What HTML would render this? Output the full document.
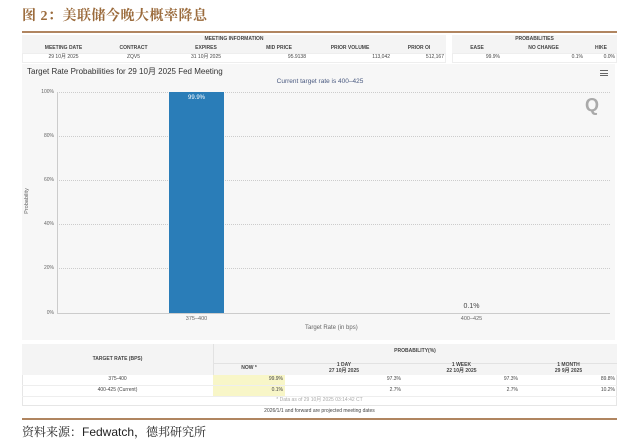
<!DOCTYPE html>
<html><head><meta charset="utf-8"><style>
*{margin:0;padding:0;box-sizing:border-box}
body{width:640px;height:440px;background:#fff;font-family:"Liberation Sans",Arial,sans-serif;position:relative;overflow:hidden;color:#333}
.a{position:absolute}
.t{font-size:5px;font-weight:bold;color:#444;text-align:center;line-height:9px}
.c{position:absolute;font-size:5px;color:#444;line-height:9px}
.g{position:absolute;left:57px;width:553px;border-top:1px dotted #ccc}
.yl{position:absolute;left:30px;width:24px;text-align:right;font-size:5px;color:#666}
</style></head><body>
<div class="a" style="left:22px;top:5px;font-family:'Liberation Serif','Noto Serif CJK SC',serif;font-size:14px;color:#9b6b3c;font-weight:bold;letter-spacing:0.5px">图 2：美联储今晚大概率降息</div>
<div class="a" style="left:22px;top:31px;width:595px;height:2px;background:#b08560"></div>

<div class="a" style="left:22px;top:35px;width:424px;height:28px;background:#f4f4f4"></div>
<div class="a" style="left:452px;top:35px;width:165px;height:28px;background:#f4f4f4"></div>
<div class="a" style="left:22px;top:53px;width:424px;height:10px;background:#fff;border:1px solid #eee"></div>
<div class="a" style="left:452px;top:53px;width:165px;height:10px;background:#fff;border:1px solid #eee"></div>
<div class="c t" style="left:22px;top:35px;width:424px">MEETING INFORMATION</div>
<div class="c t" style="left:452px;top:35px;width:165px">PROBABILITIES</div>
<div class="c t" style="left:22px;top:44px;width:83px">MEETING DATE</div>
<div class="c t" style="left:105px;top:44px;width:57px">CONTRACT</div>
<div class="c t" style="left:162px;top:44px;width:88px">EXPIRES</div>
<div class="c t" style="left:250px;top:44px;width:58px">MID PRICE</div>
<div class="c t" style="left:308px;top:44px;width:84px">PRIOR VOLUME</div>
<div class="c t" style="left:392px;top:44px;width:54px">PRIOR OI</div>
<div class="c t" style="left:452px;top:44px;width:50px">EASE</div>
<div class="c t" style="left:502px;top:44px;width:83px">NO CHANGE</div>
<div class="c t" style="left:585px;top:44px;width:32px">HIKE</div>
<div class="c" style="left:22px;top:53px;width:83px;text-align:center">29 10月 2025</div>
<div class="c" style="left:105px;top:53px;width:57px;text-align:center">ZQV5</div>
<div class="c" style="left:162px;top:53px;width:88px;text-align:center">31 10月 2025</div>
<div class="c" style="left:250px;top:53px;width:56px;text-align:right">95.9138</div>
<div class="c" style="left:308px;top:53px;width:82px;text-align:right">113,042</div>
<div class="c" style="left:392px;top:53px;width:52px;text-align:right">512,167</div>
<div class="c" style="left:452px;top:53px;width:48px;text-align:right">99.9%</div>
<div class="c" style="left:502px;top:53px;width:81px;text-align:right">0.1%</div>
<div class="c" style="left:585px;top:53px;width:30px;text-align:right">0.0%</div>

<div class="a" style="left:22px;top:64px;width:593px;height:276px;background:#f7f7f7"></div>
<div class="a" style="left:27px;top:66px;font-size:8px;color:#333">Target Rate Probabilities for 29 10月 2025 Fed Meeting</div>
<div class="a" style="left:600px;top:70px;width:8px;height:6px;border-top:1px solid #666;border-bottom:1px solid #666"><div style="margin-top:1.5px;border-top:1px solid #666"></div></div>
<div class="a" style="left:0;top:78px;width:640px;text-align:center;font-size:6.5px;color:#4a5a80">Current target rate is 400–425</div>
<div class="a" style="left:585px;top:95px;font-size:18px;font-weight:bold;color:#aaa">Q</div>
<div class="g" style="top:92px"></div><div class="g" style="top:136px"></div><div class="g" style="top:180px"></div><div class="g" style="top:224px"></div><div class="g" style="top:268px"></div>
<div class="a" style="left:57px;top:313px;width:553px;border-top:1px solid #ccc"></div>
<div class="a" style="left:57px;top:92px;height:221px;border-left:1px solid #ccc"></div>
<div class="yl" style="top:89px">100%</div><div class="yl" style="top:133px">80%</div><div class="yl" style="top:177px">60%</div><div class="yl" style="top:221px">40%</div><div class="yl" style="top:265px">20%</div><div class="yl" style="top:310px">0%</div>
<div class="a" style="left:14px;top:198px;font-size:5.5px;color:#666;transform:rotate(-90deg)">Probability</div>
<div class="a" style="left:169px;top:92px;width:55px;height:221px;background:#2a7db8"></div>
<div class="a" style="left:169px;top:95px;width:55px;text-align:center;font-size:6px;color:#fff">99.9%</div>
<div class="a" style="left:169px;top:316px;width:55px;text-align:center;font-size:5.5px;color:#666">375–400</div>
<div class="a" style="left:444px;top:303px;width:55px;text-align:center;font-size:7px;color:#444">0.1%</div>
<div class="a" style="left:444px;top:316px;width:55px;text-align:center;font-size:5.5px;color:#666">400–425</div>
<div class="a" style="left:305px;top:325px;font-size:6px;color:#666">Target Rate (in bps)</div>

<div class="a" style="left:22px;top:344px;width:595px;height:62px;border:1px solid #e6e6e6;background:#fff"></div>
<div class="a" style="left:22px;top:344px;width:595px;height:31px;background:#f4f4f4"></div>
<div class="a" style="left:213px;top:363px;width:404px;border-top:1px solid #e2e2e2"></div>
<div class="a" style="left:213px;top:344px;height:52px;border-left:1px solid #e2e2e2"></div>
<div class="a" style="left:213px;top:375px;width:72px;height:21px;background:#f8f6c8"></div>
<div class="c t" style="left:22px;top:355px;width:191px">TARGET RATE (BPS)</div>
<div class="c t" style="left:213px;top:347px;width:404px">PROBABILITY(%)</div>
<div class="c t" style="left:213px;top:364px;width:72px">NOW *</div>
<div class="c t" style="left:285px;top:361px;width:118px;line-height:6px;padding-top:1px">1 DAY<br>27 10月 2025</div>
<div class="c t" style="left:403px;top:361px;width:117px;line-height:6px;padding-top:1px">1 WEEK<br>22 10月 2025</div>
<div class="c t" style="left:520px;top:361px;width:97px;line-height:6px;padding-top:1px">1 MONTH<br>29 9月 2025</div>
<div class="c" style="left:22px;top:375px;width:191px;text-align:center">375-400</div>
<div class="c" style="left:213px;top:375px;width:70px;text-align:right">99.9%</div>
<div class="c" style="left:285px;top:375px;width:116px;text-align:right">97.3%</div>
<div class="c" style="left:403px;top:375px;width:115px;text-align:right">97.3%</div>
<div class="c" style="left:520px;top:375px;width:95px;text-align:right">89.8%</div>
<div class="a" style="left:22px;top:385px;width:595px;border-top:1px solid #eee"></div>
<div class="c" style="left:22px;top:386px;width:191px;text-align:center">400-425 (Current)</div>
<div class="c" style="left:213px;top:386px;width:70px;text-align:right">0.1%</div>
<div class="c" style="left:285px;top:386px;width:116px;text-align:right">2.7%</div>
<div class="c" style="left:403px;top:386px;width:115px;text-align:right">2.7%</div>
<div class="c" style="left:520px;top:386px;width:95px;text-align:right">10.2%</div>
<div class="a" style="left:22px;top:396px;width:595px;border-top:1px solid #eee"></div>
<div class="c" style="left:22px;top:396px;width:595px;text-align:center;color:#aaa">* Data as of 29 10月 2025 03:14:42 CT</div>
<div class="c" style="left:22px;top:407px;width:595px;text-align:center">2026/1/1 and forward are projected meeting dates</div>
<div class="a" style="left:22px;top:418px;width:595px;height:2px;background:#b08560"></div>
<div class="a" style="left:22px;top:423px;font-size:12px;color:#222;font-family:'Liberation Sans','Noto Serif CJK SC',serif">资料来源：Fedwatch，德邦研究所</div>
</body></html>
